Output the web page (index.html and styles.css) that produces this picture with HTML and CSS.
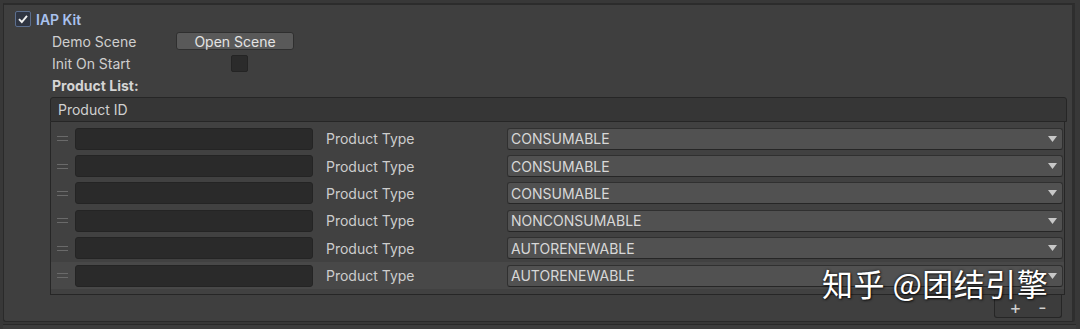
FILE: index.html
```html
<!DOCTYPE html>
<html lang="zh">
<head>
  <meta charset="UTF-8">
  <title>IAP Kit</title>
  <link rel="stylesheet" href="styles.css">
</head>
<body>
  <div id="inspector">
    <div class="title-row">
      <span class="toggle">
        <svg width="12" height="12" viewBox="0 0 12 12"><path d="M2 6.2 L4.8 9 L10 2.8" fill="none" stroke="#f2f2f2" stroke-width="1.9"/></svg>
      </span>
      <span class="title">IAP Kit</span>
    </div>
    <div class="field-row">
      <span class="label">Demo Scene</span>
      <button class="btn">Open Scene</button>
    </div>
    <div class="field-row">
      <span class="label">Init On Start</span>
      <span class="check"></span>
    </div>
    <div class="field-row">
      <span class="label bold">Product List:</span>
    </div>

    <div id="list">
      <div class="list-header">Product ID</div>
      <div class="list-body" id="rows"></div>
      <div class="list-footer">
        <span>+</span>
        <span>-</span>
      </div>
    </div>

    <div class="watermark">知乎 @团结引擎</div>
  </div>
  <div id="next-panel"></div>

  <script>
    const types = ['CONSUMABLE', 'CONSUMABLE', 'CONSUMABLE', 'NONCONSUMABLE', 'AUTORENEWABLE', 'AUTORENEWABLE'];
    const rows = document.getElementById('rows');

    types.forEach((type, i) => {
      const row = document.createElement('div');
      row.className = 'item' + (i === types.length - 1 ? ' selected' : '');
      row.innerHTML =
        '<span class="handle"></span>' +
        '<span class="text-field"></span>' +
        '<span class="type-label">Product Type</span>' +
        '<span class="dropdown">' + type +
        '<svg width="9" height="6" viewBox="0 0 9 6"><path d="M0 0 H9 L4.5 6 Z" fill="#c8c8c8"/></svg></span>';
      rows.appendChild(row);
    });
  </script>
</body>
</html>
```

FILE: styles.css
```css
body {
  margin: 0;
  padding: 0;
  background-color: #383838;
  color: #d2d2d2;
  font-family: Inter, "Noto Sans", sans-serif;
  font-size: 14px;
  height: 329px;
  overflow: hidden;
}
#inspector {
  position: relative;
  margin: 3px 5px 0 3px;
  height: 316px;
  background-color: #3f3f3f;
  border: 1px solid #2a2a2a;
  border-top: 2px solid #2c2c2c;
  border-right: 3px solid #2e2e2e;
  border-radius: 0 0 3px 3px;
  display: flex;
  flex-direction: column;
}
#next-panel {
  margin: 2px 4px 0 3px;
  height: 10px;
  border-top: 1px solid #2a2a2a;
  background-color: #3d3d3d;
}
.title-row {
  display: flex;
  align-items: center;
  gap: 5px;
  height: 18px;
  margin: 5px 0 0 11px;
}
.toggle {
  width: 14px;
  height: 14px;
  border: 1px solid #5b6e8e;
  border-radius: 2px;
  background-color: #2f3542;
  display: flex;
  align-items: center;
  justify-content: center;
}
.title {
  color: #a9c2ee;
  font-weight: 600;
  font-size: 14px;
}
.field-row {
  display: flex;
  align-items: center;
  height: 18px;
  margin: 4px 0 0 48px;
}
.label {
  width: 124px;
  color: #cfcfcf;
}
.bold {
  font-weight: 700;
  color: #d4d4d4;
}
.btn {
  font-family: inherit;
  font-size: 14px;
  color: #e4e4e4;
  background-color: #595959;
  border: 1px solid #2f2f2f;
  border-radius: 3px;
  width: 118px;
  height: 18px;
  padding: 0;
  line-height: 15px;
}
.check {
  margin-left: 55px;
  width: 15px;
  height: 15px;
  background-color: #2b2b2b;
  border: 1px solid #242424;
  border-radius: 2px;
}
#list {
  margin: 3px 5px 0 46px;
  display: flex;
  flex-direction: column;
}
.list-header {
  height: 23px;
  line-height: 23px;
  padding-left: 7px;
  background-color: #363636;
  border: 1px solid #262626;
  border-radius: 3px 3px 0 0;
  color: #d0d0d0;
}
.list-body {
  background-color: #414141;
  border: 1px solid #262626;
  border-top: none;
  margin-right: 2px;
  padding: 3px 0 5px 0;
}
.item {
  display: flex;
  align-items: center;
  height: 27.4px;
}
.item.selected {
  background-color: #484848;
}
.handle {
  width: 11px;
  height: 3px;
  margin: 0 7px 0 6px;
  border-top: 1px solid #6a6a6a;
  border-bottom: 1px solid #6a6a6a;
}
.text-field {
  width: 236px;
  height: 20px;
  background-color: #2a2a2a;
  border: 1px solid #242424;
  border-radius: 3px;
}
.type-label {
  width: 181px;
  margin-left: 13px;
  color: #cdcdcd;
}
.dropdown {
  flex: 1;
  margin-right: 1px;
  height: 20px;
  background-color: #515151;
  border: 1px solid #303030;
  border-bottom-color: #262626;
  border-radius: 3px;
  display: flex;
  align-items: center;
  justify-content: space-between;
  padding: 0 5px 0 3px;
  color: #d8d8d8;
}
.list-footer {
  align-self: flex-end;
  width: 66px;
  height: 17px;
  padding-top: 5px;
  margin-right: 5px;
  background-color: #3c3c3c;
  border: 1px solid #262626;
  border-top: none;
  border-radius: 0 0 3px 3px;
  display: flex;
  justify-content: center;
  gap: 17px;
  color: #d0d0d0;
  font-size: 18px;
  line-height: 16px;
}
.watermark {
  position: absolute;
  left: 818px;
  top: 261px;
  font-family: "Noto Sans CJK SC", sans-serif;
  font-size: 31px;
  line-height: 34px;
  letter-spacing: 0.5px;
  color: #ffffff;
  text-shadow: 0 0 3px rgba(0, 0, 0, 0.7), 1px 1px 2px rgba(0, 0, 0, 0.6);
  white-space: nowrap;
}
```
